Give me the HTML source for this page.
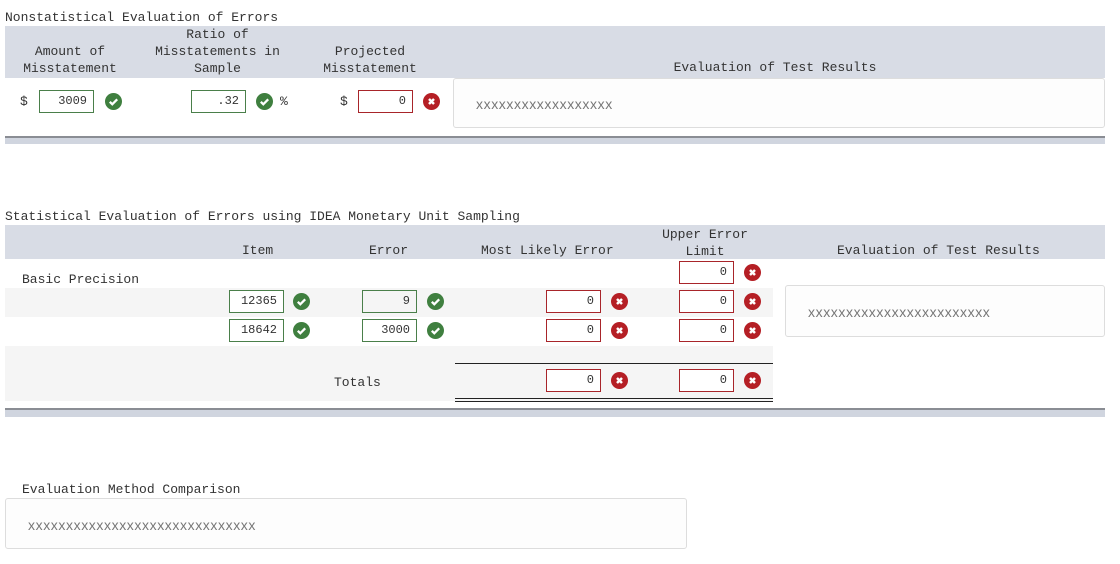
<!DOCTYPE html>
<html><head><meta charset="utf-8"><style>
*{margin:0;padding:0;box-sizing:border-box}
body{width:1120px;height:564px;background:#fff;position:relative;font-family:"Liberation Mono",monospace;font-size:13px;color:#333;overflow:hidden}
.a{position:absolute;white-space:nowrap}
.band{position:absolute;background:#d8dce5}
.in{position:absolute;height:23px;width:55px;border:1px solid #4a7f4a;background:#fff;text-align:right;padding-right:6px;line-height:21px;font-size:12px}
.r{border-color:#a8252a}
.ok,.no{position:absolute;width:17px;height:17px;border-radius:50%}
.ok{background:#3f7f3f}.no{background:#b51f25}
.ok svg,.no svg{position:absolute;left:0;top:0}
.c{text-align:center}
.ev{position:absolute;border:1px solid #ddd;border-radius:3px;background:#fdfdfd;font-family:"Liberation Sans",sans-serif;font-size:14px;letter-spacing:0.6px;color:#777;padding-left:22px}
.bar{position:absolute;left:5px;width:1100px;background:#d0d5df;border-top:2px solid #8a8d94}
</style></head><body>
<div class="a" style="left:5px;top:10px">Nonstatistical Evaluation of Errors</div>
<div class="band" style="left:5px;top:26px;width:1100px;height:52px"></div>
<div class="a c" style="left:10px;top:43px;width:120px;line-height:17px">Amount of<br>Misstatement</div>
<div class="a c" style="left:150px;top:26px;width:135px;line-height:17px">Ratio of<br>Misstatements in<br>Sample</div>
<div class="a c" style="left:310px;top:43px;width:120px;line-height:17px">Projected<br>Misstatement</div>
<div class="a c" style="left:640px;top:60px;width:270px">Evaluation of Test Results</div>

<div class="a" style="left:20px;top:94px">$</div>
<div class="in" style="left:39px;top:90px">3009</div>
<div class="ok" style="left:105px;top:93px"><svg width="17" height="17"><path d="M4.8 8.8l2.5 2.5 4.9-5" stroke="#fff" stroke-width="2.3" fill="none"/></svg></div>
<div class="in" style="left:191px;top:90px">.32</div>
<div class="ok" style="left:256px;top:93px"><svg width="17" height="17"><path d="M4.8 8.8l2.5 2.5 4.9-5" stroke="#fff" stroke-width="2.3" fill="none"/></svg></div>
<div class="a" style="left:280px;top:94px">%</div>
<div class="a" style="left:340px;top:94px">$</div>
<div class="in r" style="left:358px;top:90px">0</div>
<div class="no" style="left:423px;top:93px"><svg width="17" height="17"><path d="M6 6l5 5M11 6l-5 5" stroke="#fff" stroke-width="2.5"/></svg></div>
<div class="ev" style="left:453px;top:78px;width:652px;height:50px;line-height:50px">xxxxxxxxxxxxxxxxxx</div>
<div class="bar" style="top:136px;height:8px"></div>

<div class="a" style="left:5px;top:209px">Statistical Evaluation of Errors using IDEA Monetary Unit Sampling</div>
<div class="band" style="left:5px;top:225px;width:1100px;height:34px"></div>
<div class="a" style="left:242px;top:243px">Item</div>
<div class="a" style="left:369px;top:243px">Error</div>
<div class="a" style="left:481px;top:243px">Most Likely Error</div>
<div class="a c" style="left:650px;top:226px;width:110px;line-height:17px">Upper Error<br>Limit</div>
<div class="a" style="left:837px;top:243px">Evaluation of Test Results</div>

<div style="position:absolute;left:5px;top:288px;width:768px;height:29px;background:#f5f5f5"></div>
<div style="position:absolute;left:5px;top:346px;width:768px;height:55px;background:#f5f5f5"></div>
<div style="position:absolute;left:455px;top:363px;width:318px;height:1px;background:#222"></div>
<div style="position:absolute;left:455px;top:398px;width:318px;height:4px;border-top:1px solid #222;border-bottom:1px solid #222"></div>

<div class="a" style="left:22px;top:272px">Basic Precision</div>
<div class="in r" style="left:679px;top:261px">0</div>
<div class="no" style="left:744px;top:264px"><svg width="17" height="17"><path d="M6 6l5 5M11 6l-5 5" stroke="#fff" stroke-width="2.5"/></svg></div>

<div class="in" style="left:229px;top:290px">12365</div>
<div class="ok" style="left:293px;top:293px"><svg width="17" height="17"><path d="M4.8 8.8l2.5 2.5 4.9-5" stroke="#fff" stroke-width="2.3" fill="none"/></svg></div>
<div class="in" style="left:362px;top:290px;background:#f5f5f5">9</div>
<div class="ok" style="left:427px;top:293px"><svg width="17" height="17"><path d="M4.8 8.8l2.5 2.5 4.9-5" stroke="#fff" stroke-width="2.3" fill="none"/></svg></div>
<div class="in r" style="left:546px;top:290px">0</div>
<div class="no" style="left:611px;top:293px"><svg width="17" height="17"><path d="M6 6l5 5M11 6l-5 5" stroke="#fff" stroke-width="2.5"/></svg></div>
<div class="in r" style="left:679px;top:290px">0</div>
<div class="no" style="left:744px;top:293px"><svg width="17" height="17"><path d="M6 6l5 5M11 6l-5 5" stroke="#fff" stroke-width="2.5"/></svg></div>

<div class="in" style="left:229px;top:319px">18642</div>
<div class="ok" style="left:293px;top:322px"><svg width="17" height="17"><path d="M4.8 8.8l2.5 2.5 4.9-5" stroke="#fff" stroke-width="2.3" fill="none"/></svg></div>
<div class="in" style="left:362px;top:319px">3000</div>
<div class="ok" style="left:427px;top:322px"><svg width="17" height="17"><path d="M4.8 8.8l2.5 2.5 4.9-5" stroke="#fff" stroke-width="2.3" fill="none"/></svg></div>
<div class="in r" style="left:546px;top:319px">0</div>
<div class="no" style="left:611px;top:322px"><svg width="17" height="17"><path d="M6 6l5 5M11 6l-5 5" stroke="#fff" stroke-width="2.5"/></svg></div>
<div class="in r" style="left:679px;top:319px">0</div>
<div class="no" style="left:744px;top:322px"><svg width="17" height="17"><path d="M6 6l5 5M11 6l-5 5" stroke="#fff" stroke-width="2.5"/></svg></div>

<div class="ev" style="left:785px;top:285px;width:320px;height:52px;line-height:52px">xxxxxxxxxxxxxxxxxxxxxxxx</div>

<div class="a" style="left:334px;top:375px">Totals</div>
<div class="in r" style="left:546px;top:369px">0</div>
<div class="no" style="left:611px;top:372px"><svg width="17" height="17"><path d="M6 6l5 5M11 6l-5 5" stroke="#fff" stroke-width="2.5"/></svg></div>
<div class="in r" style="left:679px;top:369px">0</div>
<div class="no" style="left:744px;top:372px"><svg width="17" height="17"><path d="M6 6l5 5M11 6l-5 5" stroke="#fff" stroke-width="2.5"/></svg></div>

<div class="bar" style="top:408px;height:9px"></div>

<div class="a" style="left:22px;top:482px">Evaluation Method Comparison</div>
<div class="ev" style="left:5px;top:498px;width:682px;height:51px;line-height:52px">xxxxxxxxxxxxxxxxxxxxxxxxxxxxxx</div>
</body></html>
